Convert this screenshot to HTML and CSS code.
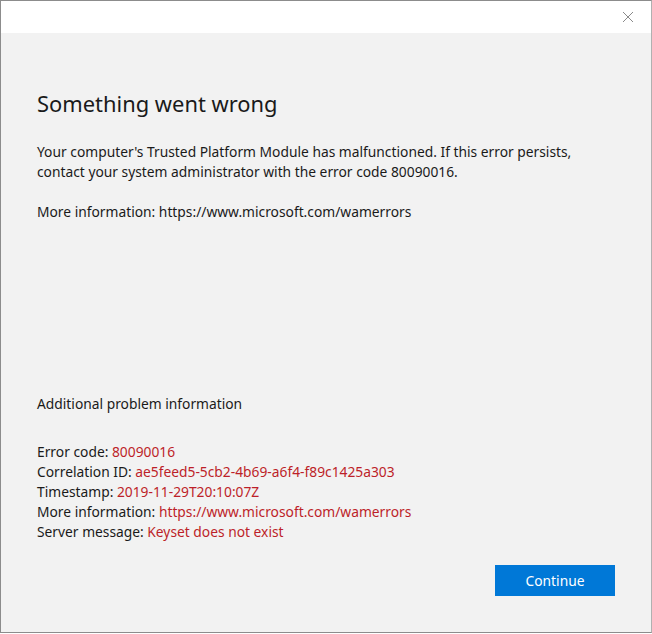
FILE: index.html
```html
<!DOCTYPE html>
<html>
<head>
<meta charset="utf-8">
<link rel="stylesheet" href="styles.css">
</head>
<body>
<div class="window">
  <div class="titlebar">
    <svg class="close" width="12" height="12" viewBox="0 0 12 12"><path d="M1 1L11 11M11 1L1 11" stroke="#8a8a8a" stroke-width="1" fill="none"/></svg>
  </div>
  <div class="content">
    <h1 class="title">Something went wrong</h1>
    <p class="para">Your computer's Trusted Platform Module has malfunctioned. If this error persists, contact your system administrator with the error code 80090016.</p>
    <p class="para">More information: https://www.microsoft.com/wamerrors</p>
    <div class="spacer"></div>
    <p class="section">Additional problem information</p>
    <div class="details">
      <div>Error code: <span class="red">80090016</span></div>
      <div>Correlation ID: <span class="red">ae5feed5-5cb2-4b69-a6f4-f89c1425a303</span></div>
      <div>Timestamp: <span class="red">2019-11-29T20:10:07Z</span></div>
      <div>More information: <span class="red">https://www.microsoft.com/wamerrors</span></div>
      <div>Server message: <span class="red">Keyset does not exist</span></div>
    </div>
    <div class="actions">
      <button class="btn">Continue</button>
    </div>
  </div>
</div>
</body>
</html>
```
FILE: styles.css
```css
html, body {
  margin: 0;
  padding: 0;
  background: #ffffff;
}
body {
  font-family: "Noto Sans", "Open Sans", sans-serif;
  color: #1a1a1a;
  width: 652px;
  height: 634px;
  overflow: hidden;
}
.window {
  width: 650px;
  height: 631px;
  border: 1px solid #8c8c8c;
  border-right-color: #b0b0b0;
  background: #f2f2f2;
  display: flex;
  flex-direction: column;
}
.titlebar {
  height: 32px;
  background: #ffffff;
  display: flex;
  justify-content: flex-end;
  align-items: center;
  padding-right: 17px;
  flex-shrink: 0;
}
.close {
  display: block;
}
.content {
  flex: 1;
  display: flex;
  flex-direction: column;
  padding: 56px 36px 0 36px;
}
.title {
  font-size: 21.9px;
  font-weight: 400;
  line-height: 30px;
  margin: 0 0 23px 0;
  color: #1a1a1a;
}
.para {
  font-size: 13.8px;
  line-height: 20px;
  margin: 0 0 20px 0;
}
.spacer {
  height: 152px;
}
.section {
  font-size: 13.8px;
  line-height: 20px;
  margin: 0 0 28px 0;
}
.details {
  font-size: 13.8px;
  line-height: 20px;
}
.red {
  color: #bd1f29;
}
.actions {
  display: flex;
  justify-content: flex-end;
  margin-top: 23px;
}
.btn {
  width: 120px;
  height: 31px;
  background: #0078d7;
  color: #ffffff;
  border: none;
  font-family: "Noto Sans", "Open Sans", sans-serif;
  font-size: 13.8px;
  padding: 0;
}
```
